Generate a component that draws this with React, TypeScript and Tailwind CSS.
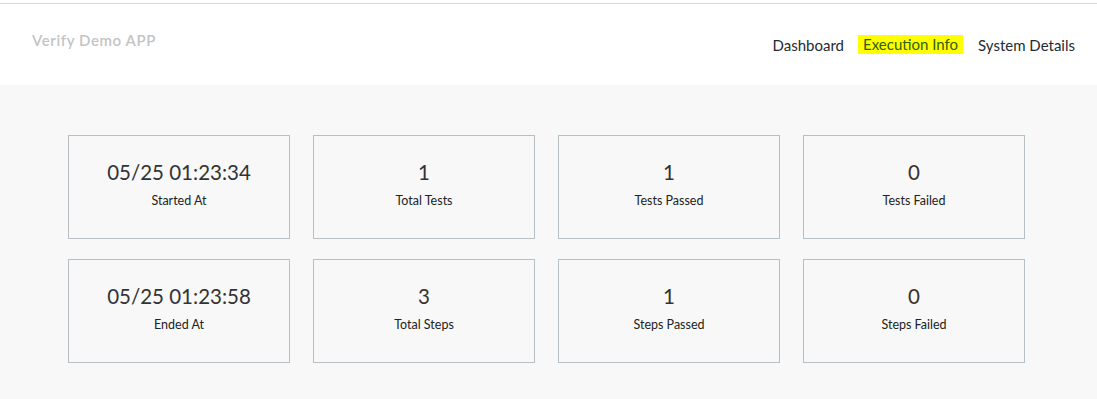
import React from "react";

type Stat = { value: string; label: string };

const rows: Stat[][] = [
  [
    { value: "05/25 01:23:34", label: "Started At" },
    { value: "1", label: "Total Tests" },
    { value: "1", label: "Tests Passed" },
    { value: "0", label: "Tests Failed" },
  ],
  [
    { value: "05/25 01:23:58", label: "Ended At" },
    { value: "3", label: "Total Steps" },
    { value: "1", label: "Steps Passed" },
    { value: "0", label: "Steps Failed" },
  ],
];

const StatCard: React.FC<Stat> = ({ value, label }) => (
  <div className="w-[222px] h-[104px] border border-[#b5bfc4] flex flex-col items-center pt-[21px]">
    <div className="text-[20.5px] leading-[30px] text-[#333]">{value}</div>
    <div className="text-[12.5px] leading-[18px] mt-[5px] text-[#222]">{label}</div>
  </div>
);

export default function App() {
  return (
    <div
      className="min-h-[399px] bg-[#f8f8f8]"
      style={{ fontFamily: "Lato, 'Open Sans', sans-serif" }}
    >
      <div className="pt-[3px] bg-white">
        <div className="border-t border-[#d9d9d9] h-[82px] flex justify-between bg-white">
          <div className="pl-[32px] pt-[25px] text-[15px] font-semibold text-[#c4c4c4] tracking-[0.6px]">
            Verify Demo APP
          </div>
          <nav className="flex items-start pt-[30px] pr-[22px] text-[15px] text-[#1f2a33]">
            <a>Dashboard</a>
            <a className="ml-[14px] px-[5px] bg-[#ffff00] text-[#2f5e0c] leading-[19px] mt-[1px]">
              Execution Info
            </a>
            <a className="ml-[15px]">System Details</a>
          </nav>
        </div>
      </div>
      <div className="pt-[50px] pl-[68px] flex flex-col gap-[20px]">
        {rows.map((row, i) => (
          <div key={i} className="flex gap-[23px]">
            {row.map((s) => (
              <StatCard key={s.label} value={s.value} label={s.label} />
            ))}
          </div>
        ))}
      </div>
    </div>
  );
}
